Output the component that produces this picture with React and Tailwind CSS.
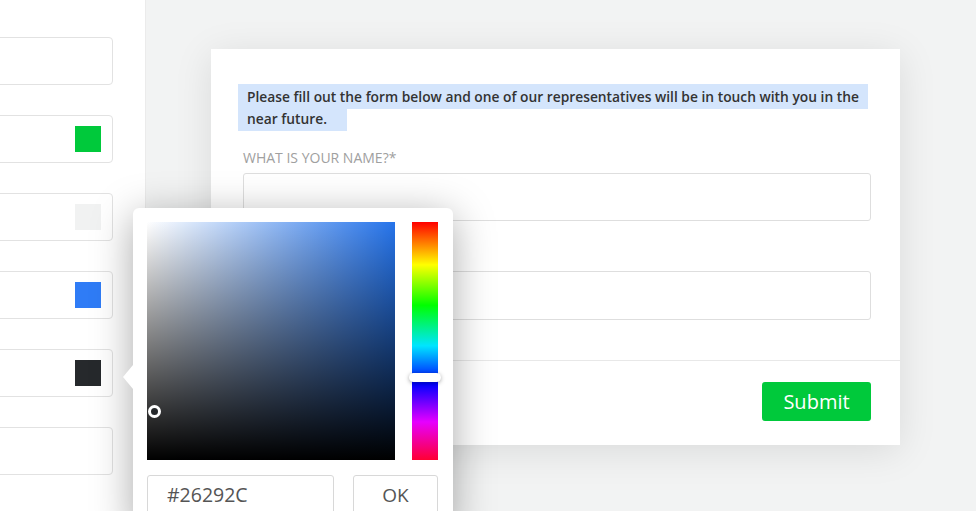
import React from 'react';

const swatches = [null, '#00c93b', '#f1f2f2', '#2f7cf6', '#26292c', null];

const SidePanel = () => (
    <div className="w-[146px] shrink-0 bg-white border-r border-[#ebebeb] pt-[37px] flex flex-col gap-[30px] overflow-hidden">
        {swatches.map((c, i) => (
            <div key={i} className="ml-[-10px] w-[123px] h-[48px] shrink-0 bg-white border border-[#e2e2e2] rounded-[4px] flex items-center justify-end pr-[11px]">
                {c && <div className="w-[26px] h-[26px]" style={{ backgroundColor: c }} />}
            </div>
        ))}
    </div>
);

const FormCard = () => (
    <div className="ml-[65px] mt-[49px] w-[689px] h-[396px] bg-white shadow-[0_6px_36px_rgba(0,0,0,0.1)] flex flex-col">
        <div className="pl-[32px] pr-[29px] pt-[37px]">
            <p className="text-[13.8px] leading-[21.5px] font-semibold text-[#333] ml-[-5px]">
                <span className="bg-[#d4e5fc] py-[3px] px-[9px] box-decoration-clone">
                    Please fill out the form below and one of our representatives will be in touch with you in the near future.&nbsp;&nbsp;&nbsp;
                </span>
            </p>
            <label className="block mt-[20px] mb-[7px] text-[14px] leading-[17px] uppercase text-[#a0a0a0]">What is your name?*</label>
            <div className="h-[48px] border border-[#dedede] rounded-[3px]" />
            <label className="block mt-[25px] mb-[8px] text-[14px] leading-[17px] uppercase text-[#a0a0a0]">What is your email?*</label>
            <div className="h-[49px] border border-[#dedede] rounded-[3px]" />
        </div>
        <div className="mt-[40px] border-t border-[#e8e8e8] flex justify-end pr-[29px] pt-[21px]">
            <button className="w-[109px] h-[39px] bg-[#00c93b] rounded-[3px] text-white text-[20px] font-medium">Submit</button>
        </div>
    </div>
);

const ColorPicker = () => (
    <div className="absolute left-[133px] top-[208px] w-[320px] h-[320px] bg-white rounded-[6px] p-[14px] shadow-[0_8px_40px_rgba(0,0,0,0.34)]">
        <div className="absolute left-[-10px] top-[157px] w-0 h-0 border-y-[12px] border-y-transparent border-r-[10px] border-r-white" />
        <div className="flex gap-[17px]">
            <div className="relative w-[248px] h-[238px] bg-[#2674ea]">
                <div className="absolute inset-0 bg-gradient-to-r from-white to-transparent" />
                <div className="absolute inset-0 bg-gradient-to-b from-transparent to-black" />
                <div className="absolute left-[1px] top-[183px] w-[13px] h-[13px] rounded-full border-[3px] border-white bg-[#26292c]" />
            </div>
            <div className="relative w-[26px] h-[238px] bg-[linear-gradient(to_bottom,#ff0000_0%,#ffff00_18%,#00ff00_35%,#00e5ff_52%,#0000ff_68%,#e600ff_84%,#ff0033_100%)]">
                <div className="absolute left-[-3px] top-[151px] w-[32px] h-[9px] rounded-full bg-white shadow-[0_1px_4px_rgba(0,0,0,0.35)]" />
            </div>
        </div>
        <div className="mt-[15px] flex gap-[19px]">
            <div className="w-[187px] h-[40px] border border-[#d8d8d8] rounded-[3px] pl-[19px] flex items-center text-[19.5px] text-[#555]">#26292C</div>
            <button className="w-[85px] h-[40px] border border-[#d8d8d8] rounded-[3px] text-[19px] text-[#555]">OK</button>
        </div>
    </div>
);

export default function App() {
    return (
        <div className="relative w-[976px] h-[511px] overflow-hidden bg-[#f2f3f3] flex" style={{ fontFamily: '"Open Sans", sans-serif' }}>
            <SidePanel />
            <FormCard />
            <ColorPicker />
        </div>
    );
}
